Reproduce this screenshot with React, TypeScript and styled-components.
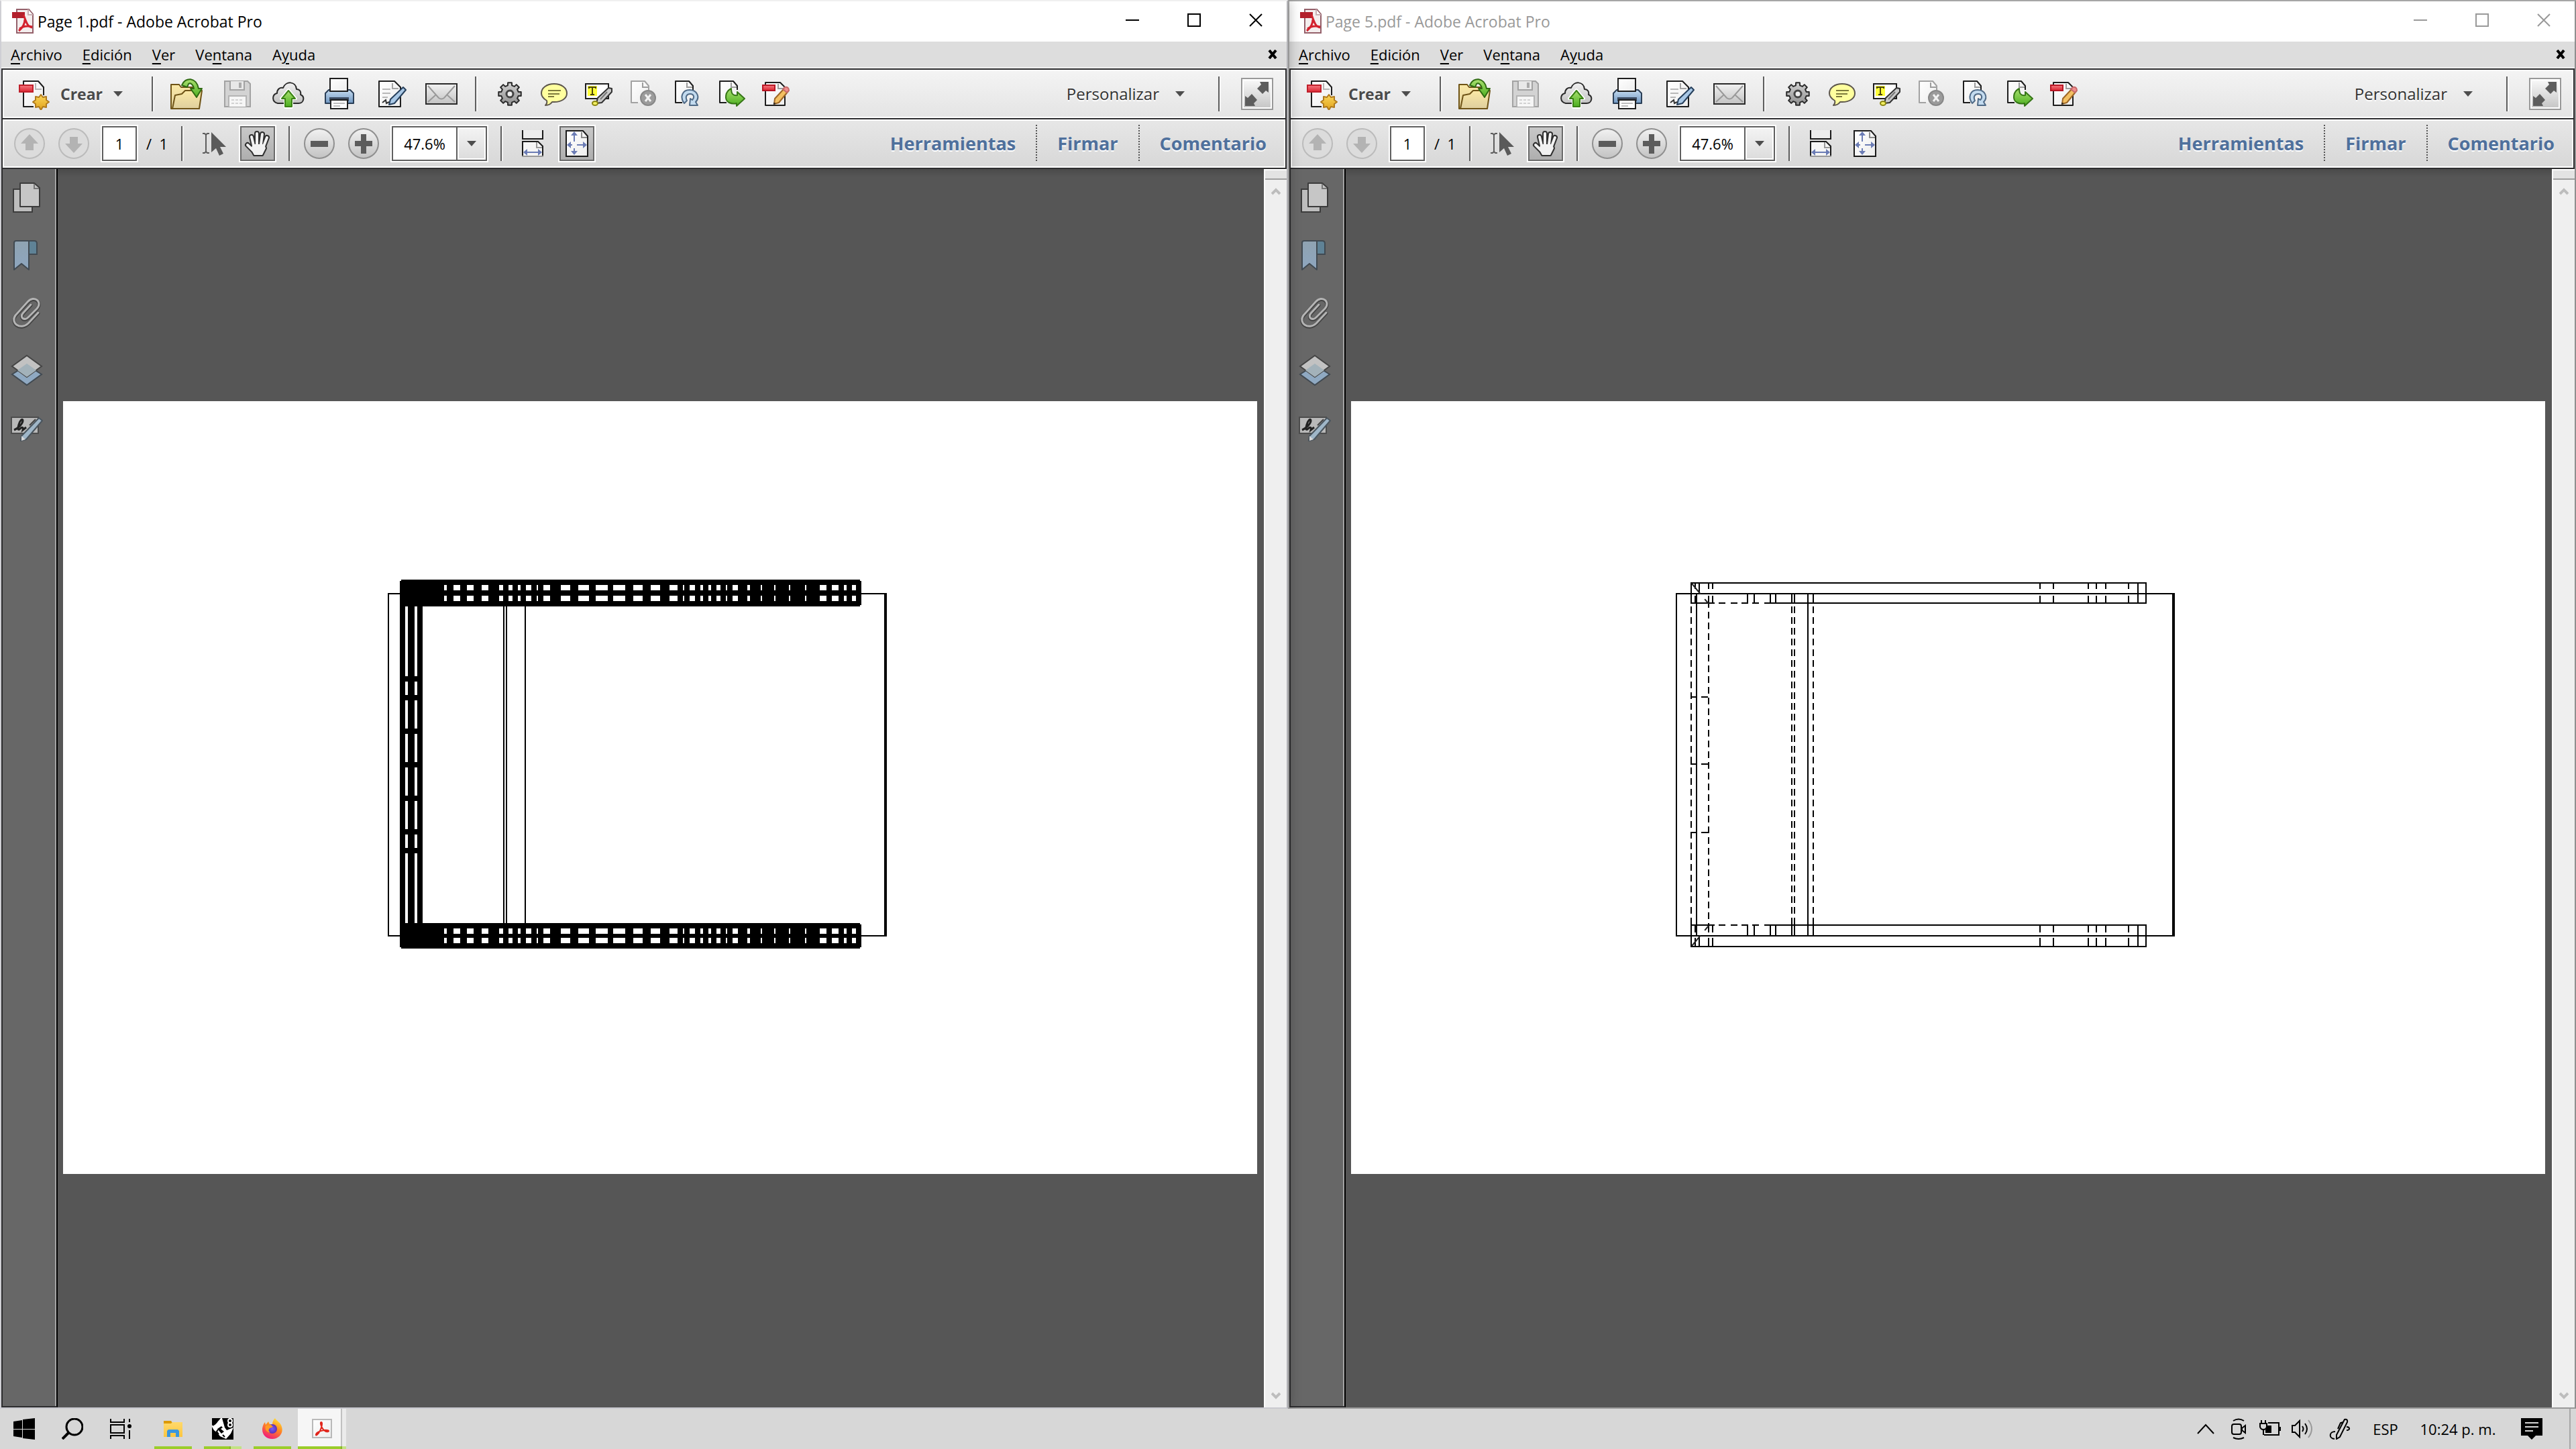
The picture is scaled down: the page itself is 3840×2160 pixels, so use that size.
import React from "react";
import styled, { createGlobalStyle, css } from "styled-components";

const INK = "#2d2d2f";
const UI_FONT = `"Open Sans", "Noto Sans", sans-serif`;

const GlobalStyle = createGlobalStyle`
  *, *::before, *::after { box-sizing: border-box; }
  html, body { margin: 0; background: #d7d7d7; }
  body { font-family: ${UI_FONT}; color: #000; overflow: hidden; }
  button, input { font-family: inherit; color: inherit; margin: 0; padding: 0; border: 0; background: none; }
  svg { display: block; flex: none; }
`;

/* ---------- Layout ---------- */

const Desktop = styled.div`
  display: flex;
  flex-direction: column;
  height: 100vh;
`;

const Windows = styled.div`
  display: flex;
  flex: 1;
  min-height: 0;
`;

const Pane = styled.section<{ $active: boolean }>`
  display: flex;
  flex-direction: column;
  flex: 1;
  min-width: 0;
  position: relative;
  background: #fff;
  border-style: solid;
  border-width: 2px;
  ${({ $active }) =>
    $active
      ? css`
          border-color: #f0f0f0 #b4b4b8 #c9c9cf #cfcfd4;
          z-index: 1;
          box-shadow: 0 0 18px rgba(0, 0, 0, 0.32);
        `
      : css`
          border-color: #a6a6a6 #8f8f8f #9a9a9a #b0b0b0;
        `}
`;

const TitleBar = styled.header`
  display: flex;
  align-items: center;
  height: 60px;
  padding-left: 16px;
  background: #fff;
`;

const Title = styled.h1<{ $active: boolean }>`
  flex: 1;
  margin: 0 0 0 6px;
  font-size: 23px;
  line-height: 32px;
  font-weight: 400;
  color: ${({ $active }) => ($active ? "#000" : "#999")};
`;

const WindowButton = styled.button<{ $active: boolean }>`
  display: flex;
  align-items: center;
  justify-content: center;
  width: 92px;
  height: 56px;
  align-self: flex-start;
  color: ${({ $active }) => ($active ? "#000" : "#999")};
`;

const MenuBar = styled.nav`
  display: flex;
  align-items: center;
  gap: 30px;
  height: 40px;
  padding: 0 14px;
  background: #ddd;
  border-bottom: 2px solid #efefef;
`;

const MenuItem = styled.button`
  font-size: 22px;
  line-height: 32px;
  u {
    text-decoration-thickness: 2px;
    text-underline-offset: 4px;
  }
`;

const CloseDocument = styled.button`
  margin-left: auto;
  width: 14px;
  height: 14px;
`;

const Bar = styled.div<{ $low?: boolean }>`
  display: flex;
  align-items: center;
  flex: none;
  height: ${({ $low }) => ($low ? 76 : 74)}px;
  border: 2px solid ${INK};
  border-bottom-width: ${({ $low }) => ($low ? 2 : 0)}px;
  background: ${({ $low }) =>
    $low ? "linear-gradient(#e7e7e7, #d7d7d7)" : "linear-gradient(#f4f4f4, #e4e4e4)"};
  box-shadow: inset 0 0 0 2px #fff;
`;

const Rule = styled.span<{ $before?: number; $after?: number }>`
  flex: none;
  width: 2px;
  height: 52px;
  margin-left: ${({ $before = 0 }) => $before}px;
  margin-right: ${({ $after = 0 }) => $after}px;
  background: #5e5e5e;
  box-shadow: 2px 0 0 rgba(255, 255, 255, 0.6);
`;

const DottedRule = styled.span`
  flex: none;
  width: 2px;
  height: 56px;
  background: repeating-linear-gradient(#555 0 2px, transparent 2px 4px);
`;

const Spacer = styled.span`
  flex: 1;
`;

const ToolGroup = styled.div<{ $gap: number }>`
  display: flex;
  align-items: center;
  gap: ${({ $gap }) => $gap}px;
`;

const CreateButton = styled.button`
  display: flex;
  align-items: center;
  width: 222px;
  height: 52px;
  padding-left: 22px;
  font-size: 23px;
  line-height: 32px;
  font-weight: 700;
  color: #4a4a4a;
  text-shadow: 0 2px 0 #fff;
  gap: 16px;
`;

const Tool = styled.button<{ $width: number }>`
  display: flex;
  align-items: center;
  justify-content: center;
  flex: none;
  width: ${({ $width }) => $width}px;
  height: 52px;
`;

const Toggle = styled.button<{ $on: boolean }>`
  display: flex;
  align-items: center;
  justify-content: center;
  flex: none;
  width: 56px;
  height: 56px;
  border: 2px solid transparent;
  ${({ $on }) =>
    $on &&
    css`
      border-color: #fff;
      background: linear-gradient(#c9c9c9, #adadad);
      box-shadow: inset 0 0 0 2px #6b6b6b;
    `}
`;

const Customize = styled.button`
  display: flex;
  align-items: center;
  gap: 24px;
  font-size: 24px;
  line-height: 32px;
  color: #333;
  text-shadow: 0 2px 0 #fff;
`;

const ExpandButton = styled.button`
  display: flex;
  align-items: center;
  justify-content: center;
  width: 48px;
  height: 48px;
  margin-right: 18px;
  border: 2px solid #999;
  box-shadow: inset 0 0 0 2px #fff;
  background: linear-gradient(#fafafa, #c4c4c4);
`;

const TaskTab = styled.button`
  padding: 0 30px;
  font-size: 27px;
  line-height: 40px;
  font-weight: 700;
  color: #4f709c;
  text-shadow: 0 2px 0 #fff;
  &:last-child {
    padding-right: 28px;
  }
`;

const FieldFrame = styled.label<{ $width: number }>`
  display: flex;
  align-items: stretch;
  flex: none;
  width: ${({ $width }) => $width}px;
  height: 52px;
  border: 2px solid #5f5f5f;
  outline: 2px solid #fff;
  background: #fff;
`;

const Field = styled.input`
  flex: 1;
  min-width: 0;
  width: 0;
  font-size: 22px;
  line-height: 32px;
  text-align: center;
`;

const ZoomArrow = styled.button`
  display: flex;
  align-items: center;
  justify-content: center;
  width: 44px;
  border-left: 2px solid #5f5f5f;
  background: linear-gradient(#f4f4f4, #dcdcdc);
  box-shadow: inset 0 0 0 2px #fff;
`;

const PageCount = styled.span`
  width: 52px;
  margin-left: 14px;
  font-size: 22px;
  line-height: 32px;
  white-space: pre;
`;

const Pager = styled.div`
  display: flex;
  align-items: center;
  gap: 18px;
  padding-left: 16px;
`;

const Body = styled.div`
  display: flex;
  flex: 1;
  min-height: 0;
`;

const Sidebar = styled.aside`
  display: flex;
  flex-direction: column;
  align-items: center;
  gap: 38px;
  flex: none;
  width: 84px;
  padding: 18px 8px 0 0;
  background: #676767;
  border-left: 2px solid ${INK};
  border-right: 2px solid #000;
  border-bottom: 2px solid ${INK};
  box-shadow: inset -2px 0 0 #a3a3a3;
`;

const SideButton = styled.button`
  flex: none;
  width: 48px;
  height: 48px;
`;

const Workspace = styled.main`
  display: flex;
  align-items: center;
  flex: 1;
  min-width: 0;
  padding: 0 10px 2px 8px;
  background: linear-gradient(#4a4a4a, #565656 12px);
`;

const Sheet = styled.article`
  flex: 1;
  aspect-ratio: 1780 / 1152;
  background: #fff;
  svg {
    width: 100%;
    height: 100%;
  }
`;

const ScrollTrack = styled.div`
  display: flex;
  flex-direction: column;
  align-items: center;
  flex: none;
  width: 34px;
  background: #efefef;
  border-left: 2px solid #fff;
`;

const SplitHandle = styled.span`
  width: 100%;
  height: 16px;
  border-top: 2px solid #fff;
  border-bottom: 2px solid #9f9f9f;
  background: #e3e3e3;
`;

const ScrollButton = styled.button`
  display: flex;
  align-items: center;
  justify-content: center;
  width: 32px;
  height: 34px;
  &:last-child {
    margin-top: auto;
  }
`;

const Taskbar = styled.footer`
  display: flex;
  align-items: stretch;
  flex: none;
  height: 60px;
  position: relative;
  z-index: 2;
  background: #d7d7d7;
`;

const TaskButton = styled.button<{ $state?: "idle" | "running" | "stacked" | "active" }>`
  display: flex;
  align-items: center;
  justify-content: center;
  flex: none;
  width: 72px;
  background-repeat: no-repeat;
  ${({ $state }) =>
    $state === "running" &&
    css`
      background-image: linear-gradient(#9acd2a, #9acd2a);
      background-position: 8px 100%;
      background-size: 56px 4px;
    `}
  ${({ $state }) =>
    $state === "stacked" &&
    css`
      background-image: linear-gradient(90deg, #9acd2a 0 38px, #86b428 38px 40px, #c3e283 40px);
      background-position: 8px 100%;
      background-size: 56px 4px;
    `}
  ${({ $state }) =>
    $state === "active" &&
    css`
      background-image: linear-gradient(90deg, #9acd2a 0 64px, #86b428 64px 66px, #c3e283 66px),
        linear-gradient(90deg, #f6f6f6 0 64px, #c0c0c0 64px 66px, #ebebeb 66px);
      background-position: 0 100%, 0 0;
      background-size: 100% 4px, 100% 100%;
    `}
`;

const TaskApps = styled.div`
  display: flex;
  gap: 2px;
  margin-left: 6px;
`;

const Tray = styled.div`
  display: flex;
  margin-left: auto;
`;

const TrayButton = styled.button<{ $width?: number }>`
  display: flex;
  align-items: center;
  justify-content: center;
  flex: none;
  width: ${({ $width = 48 }) => $width}px;
  font-size: 22px;
  line-height: 32px;
`;

const ShowDesktop = styled.button`
  width: 10px;
  margin-left: 18px;
  border-left: 2px solid #a8a8a8;
`;

/* ---------- Shared gradients ---------- */

const Gradients = () => (
  <svg width="0" height="0" aria-hidden="true">
    <defs>
      <linearGradient id="paper" x2="1" y2="1">
        <stop stopColor="#fff" />
        <stop offset="1" stopColor="#ededed" />
      </linearGradient>
      <linearGradient id="grey" x2="0" y2="1">
        <stop stopColor="#f2f2f2" />
        <stop offset="1" stopColor="#c2c2c2" />
      </linearGradient>
      <linearGradient id="steel" x2="0" y2="1">
        <stop stopColor="#d0d0d0" />
        <stop offset="1" stopColor="#8e8e8e" />
      </linearGradient>
      <linearGradient id="red" x2="0" y2="1">
        <stop stopColor="#f47a80" />
        <stop offset="1" stopColor="#dc2430" />
      </linearGradient>
      <linearGradient id="green" x2="0" y2="1">
        <stop stopColor="#a9e070" />
        <stop offset="1" stopColor="#4caf1f" />
      </linearGradient>
      <linearGradient id="blue" x2="0" y2="1">
        <stop stopColor="#c6dcf0" />
        <stop offset="1" stopColor="#6f97c2" />
      </linearGradient>
      <linearGradient id="manila" x2="0" y2="1">
        <stop stopColor="#fbe9a6" />
        <stop offset="1" stopColor="#dfcf9e" />
      </linearGradient>
      <linearGradient id="gold" x2="0" y2="1">
        <stop stopColor="#fbd75a" />
        <stop offset="1" stopColor="#e0a21c" />
      </linearGradient>
      <linearGradient id="slate" x2="0" y2="1">
        <stop stopColor="#8fa3b2" />
        <stop offset="1" stopColor="#8ea6bf" />
      </linearGradient>
      <linearGradient id="flame" x1="0.8" x2="0.3" y2="1">
        <stop stopColor="#ffe63c" />
        <stop offset="0.45" stopColor="#ff8a1f" />
        <stop offset="1" stopColor="#f0177f" />
      </linearGradient>
      <radialGradient id="globe">
        <stop stopColor="#7a5cf5" />
        <stop offset="1" stopColor="#5b2fb5" />
      </radialGradient>
      <linearGradient id="folder" x2="0" y2="1">
        <stop stopColor="#ffd96b" />
        <stop offset="1" stopColor="#fbc540" />
      </linearGradient>
    </defs>
  </svg>
);

type GlyphProps = { size?: number; children: React.ReactNode };
const Glyph = ({ size = 48, children }: GlyphProps) => (
  <svg width={size} height={size} viewBox={`0 0 ${size} ${size}`} fill="none" aria-hidden="true">
    {children}
  </svg>
);

/* ---------- Toolbar icons ---------- */

const Caret = () => (
  <svg width="14" height="10" viewBox="0 0 14 10" aria-hidden="true">
    <path d="M0 1h14L7 9z" fill="#4d4d4d" />
  </svg>
);

const AcrobatDoc = () => (
  <svg width="32" height="40" viewBox="0 0 32 40" fill="none" aria-hidden="true">
    <path d="M7 2h18l6 7v28H7z" fill="#f4eeee" stroke="#94606a" strokeWidth="2" />
    <path d="M24 2v8h7" fill="#fff" stroke="#c9b0b4" strokeWidth="2" />
    <path d="M0 6h19v9H0z" fill="#b3202c" />
    <path d="M17 10c4 11 6 18 13 19M19 17c0 8-4 13-9 17M11 31c5-4 12-5 19-3" stroke="#d3212d" strokeWidth="3" />
  </svg>
);

const CreateIcon = () => (
  <Glyph>
    <path d="M9 5h22l8 8v31H9z" fill="url(#paper)" />
    <path d="M9 13V5h22l8 9v12M9 20v23h15" stroke="#1e1e1e" strokeWidth="2" strokeLinejoin="round" />
    <path d="M27 8v9h9" stroke="#b5b5b5" strokeWidth="2" />
    <path d="M3 11h20v10H3z" fill="url(#red)" stroke="#c0202b" strokeWidth="2" />
    <path
      d="M35 25l3 4 5-1v5l4 3-4 3v5l-5-1-3 5-3-5-5 1v-5l-4-3 4-3v-5l5 1z"
      fill="url(#gold)"
      stroke="#b07a1c"
      strokeWidth="2"
      strokeLinejoin="round"
    />
  </Glyph>
);

const OpenIcon = () => (
  <Glyph>
    <path d="M1 10h12l3 4h23v32H1z" fill="url(#manila)" stroke="#6f5417" strokeWidth="2" strokeLinejoin="round" />
    <path d="M3 46l4-20 10-2 5-5h25l-4 27z" fill="url(#manila)" stroke="#6f5417" strokeWidth="2" strokeLinejoin="round" />
    <path
      d="M17 11C22-2 39-1 42 16h5l-8 13-9-13h5c-1-6-5-9-8-7l-2 5z"
      fill="url(#green)"
      stroke="#2f6a12"
      strokeWidth="2"
      strokeLinejoin="round"
    />
  </Glyph>
);

const SaveIcon = () => (
  <Glyph>
    <path d="M5 5h34l4 4v34H5z" fill="#d3d3d3" stroke="#a2a2a2" strokeWidth="2" />
    <path d="M13 5v13h21V5" fill="#e8e8e8" stroke="#a2a2a2" strokeWidth="2" />
    <path d="M26 7h4v8h-4z" fill="#aaa" />
    <path d="M11 43V27h26v16" fill="#f6f6f6" stroke="#b4b4b4" strokeWidth="2" />
    <path d="M15 33h18M15 38h18" stroke="#d2d2d2" strokeWidth="2" strokeDasharray="4 2" />
  </Glyph>
);

const CloudIcon = () => (
  <Glyph>
    <path
      d="M8 38C-1 36-1 25 7 23c0-6 4-9 9-8 4-11 19-10 20 2 5 0 7 4 6 8 7 3 5 13-3 13z"
      fill="url(#grey)"
      stroke="#2a2a2a"
      strokeWidth="2"
      strokeLinejoin="round"
    />
    <path d="M24 18l11 13h-6v13H19V31h-6z" fill="url(#green)" stroke="#fff" strokeWidth="4" strokeLinejoin="round" />
    <path d="M24 19l10 12h-5v12H19V31h-5z" fill="url(#green)" stroke="#3b8216" strokeWidth="2" strokeLinejoin="round" />
  </Glyph>
);

const PrintIcon = () => (
  <Glyph>
    <path d="M3 23l5-5h32l5 5v15H3z" fill="url(#blue)" stroke="#2b3f57" strokeWidth="2" strokeLinejoin="round" />
    <path d="M10 1h26v19H10z" fill="url(#paper)" stroke="#1e1e1e" strokeWidth="2" />
    <path d="M9 29h29v6H9z" fill="#3c4b60" />
    <path d="M11 33h25v13H11z" fill="#fff" stroke="#1e1e1e" strokeWidth="2" />
    <path d="M15 38h17M15 42h10" stroke="#bdbdbd" strokeWidth="2" />
  </Glyph>
);

const SignDocIcon = () => (
  <Glyph>
    <path d="M7 5h23l9 9v29H7z" fill="url(#paper)" stroke="#1e1e1e" strokeWidth="2" strokeLinejoin="round" />
    <path d="M27 8v8h9" stroke="#a5a5a5" strokeWidth="2" />
    <path d="M12 17h12M12 23h12M12 29h8" stroke="#b8b8b8" strokeWidth="2" />
    <path d="M43 14l4 4-17 20-8 2 2-8z" fill="#a9c8e6" stroke="#27405c" strokeWidth="2" strokeLinejoin="round" />
    <path d="M12 37l5-4 1 5 4-2" stroke="#333" strokeWidth="2" />
  </Glyph>
);

const MailIcon = () => (
  <Glyph>
    <path d="M1 9h46v30H1z" fill="url(#grey)" stroke="#2a2a2a" strokeWidth="2" />
    <path d="M4 12l16 18q4 3 8 0l16-18M4 36l12-11M44 36L32 25" stroke="#999" strokeWidth="2" />
  </Glyph>
);

const gearPath = (() => {
  const points: string[] = [];
  const teeth = 8;
  for (let i = 0; i < teeth; i++) {
    const centre = (i / teeth) * Math.PI * 2;
    [
      [-0.24, 13],
      [-0.17, 17],
      [0.17, 17],
      [0.24, 13],
    ].forEach(([offset, radius]) => {
      points.push(`${(24 + Math.sin(centre + offset) * radius).toFixed(2)} ${(24 - Math.cos(centre + offset) * radius).toFixed(2)}`);
    });
  }
  return `M${points.join("L")}z`;
})();

const GearIcon = () => (
  <Glyph>
    <path d={gearPath} fill="url(#steel)" stroke="#2a2a2a" strokeWidth="2" strokeLinejoin="round" />
    <circle cx="24" cy="24" r="5" fill="#efefef" stroke="#444" strokeWidth="3" />
  </Glyph>
);

const CommentIcon = () => (
  <Glyph>
    <path
      d="M24 9c11 0 19 6 19 14s-8 13-19 13h-3c-2 3-5 5-10 5 2-2 3-4 2-7-5-3-8-6-8-11C5 15 13 9 24 9z"
      fill="#ffff9e"
      stroke="#5d564c"
      strokeWidth="2"
      strokeLinejoin="round"
    />
    <path d="M15 19h19M15 24h17M15 28h9" stroke="#7d7a3c" strokeWidth="2" />
  </Glyph>
);

const HighlightIcon = () => (
  <Glyph>
    <path d="M5 9h34v22H5z" fill="#fff" stroke="#1e1e1e" strokeWidth="2" />
    <path d="M8 12h14v15H8z" fill="#ffff3a" />
    <path d="M10 16v-2h10v2M15 14v11M12 25h6" stroke="#4d470c" strokeWidth="2" />
    <path d="M39 15l5 1v5L29 37l-8 1 2-8z" fill="#c9c9c9" stroke="#333" strokeWidth="2" strokeLinejoin="round" />
    <path d="M27 32l10-11" stroke="#777" strokeWidth="2" />
    <ellipse cx="19" cy="38" rx="4" ry="3" fill="#f1ee62" stroke="#8b8611" strokeWidth="2" />
  </Glyph>
);

const PageOutline = ({ stroke }: { stroke: string }) => (
  <>
    <path d="M7 5h20l6 7v25H7z" fill="url(#paper)" />
    <path d="M17 37H7V5h20l6 7v6" stroke={stroke} strokeWidth="2" strokeLinejoin="round" />
    <path d="M24 7v7h8" stroke="#9d9d9d" strokeWidth="2" />
  </>
);

const DeletePageIcon = () => (
  <Glyph>
    <PageOutline stroke="#a2a2a2" />
    <circle cx="32" cy="30" r="11" fill="#9b9b9b" stroke="#878787" strokeWidth="2" />
    <path d="M28 25l8 10M36 25l-8 10" stroke="#f1f1f1" strokeWidth="3" />
  </Glyph>
);

const RotatePageIcon = () => (
  <Glyph>
    <PageOutline stroke="#1e1e1e" />
    <path
      d="M20 38c-7-9-3-20 8-20s16 11 9 18l3 5H28l1-10 3 2c4-4 2-9-3-9s-8 4-5 10z"
      fill="#c3dbef"
      stroke="#4f6a86"
      strokeWidth="2"
      strokeLinejoin="round"
    />
  </Glyph>
);

const ExtractPageIcon = () => (
  <Glyph>
    <PageOutline stroke="#1e1e1e" />
    <path
      d="M24 16c-9 4-11 17-3 21 4 2 7 2 11 1v4l12-11-11-10v5c-7 1-9-3-9-10z"
      fill="url(#green)"
      stroke="#357516"
      strokeWidth="2"
      strokeLinejoin="round"
    />
  </Glyph>
);

const EditPdfIcon = () => (
  <Glyph>
    <path d="M9 7h22l7 7v27H9z" fill="url(#paper)" stroke="#1e1e1e" strokeWidth="2" strokeLinejoin="round" />
    <path d="M28 9v7h8" stroke="#9d9d9d" strokeWidth="2" />
    <path d="M5 11h18v8H5z" fill="url(#red)" stroke="#b81624" strokeWidth="2" />
    <path d="M37 16l6 4-14 17-7 2 1-8z" fill="#f3c062" stroke="#9d6626" strokeWidth="2" strokeLinejoin="round" />
    <path d="M38 14q6-1 6 5l-3 3-6-5z" fill="#f08f8f" stroke="#c76a6a" strokeWidth="2" />
    <path d="M21 37l4 1-4 2z" fill="#222" />
  </Glyph>
);

const ExpandIcon = () => (
  <svg width="40" height="40" viewBox="0 0 40 40" fill="#5d5d5d" aria-hidden="true">
    <path d="M24 2h13v16l-4-3-5 5-8-8 6-6z" />
    <path d="M17 38H2V23l4 3 6-6 8 9-5 5z" />
  </svg>
);

type RoundKind = "up" | "down" | "minus" | "plus";
const roundShapes: Record<RoundKind, string> = {
  up: "M23 9l13 14h-7v10H17V23h-7z",
  down: "M23 37L10 23h7V13h12v10h7z",
  minus: "M10 19h26v9H10z",
  plus: "M19 9h8v10h9v8h-9v11h-8V27h-9v-8h9z",
};

const RoundIcon = ({ kind }: { kind: RoundKind }) => {
  const faded = kind === "up" || kind === "down";
  return (
    <Glyph size={46}>
      <circle cx="23" cy="23" r="22" fill={faded ? "#dcdcdc" : "url(#grey)"} stroke={faded ? "#bbb" : "#8f8f8f"} strokeWidth="2" />
      <path d={roundShapes[kind]} fill={faded ? "#b3b3b3" : "#5c5c5c"} />
    </Glyph>
  );
};

const SelectIcon = () => (
  <svg width="38" height="40" viewBox="0 0 38 40" fill="none" aria-hidden="true">
    <path d="M2 5h3l2 2 2-2h3M2 34h3l2-2 2 2h3M7 7v25" stroke="#5d5d5d" strokeWidth="2" />
    <path d="M15 3l22 22h-9l5 10-6 3-5-11-7 6z" fill="#5a5a5a" />
  </svg>
);

const handFingers = "M14 24L11 11M19 22V6M25 22l2-15M29 25l5-13M13 31l-8-8";
const handPalm = "M13 22h17l2 6-5 10H15l-5-9z";

const HandIcon = () => (
  <svg width="40" height="42" viewBox="0 0 40 42" fill="none" strokeLinecap="round" strokeLinejoin="round" aria-hidden="true">
    <path d={handFingers} stroke="#2f2f2f" strokeWidth="8" />
    <path d={handPalm} fill="#2f2f2f" stroke="#2f2f2f" strokeWidth="4" />
    <path d={handFingers} stroke="#f1f1f1" strokeWidth="4" />
    <path d={handPalm} fill="#f1f1f1" />
  </svg>
);

const FitWidthIcon = () => (
  <svg width="34" height="42" viewBox="0 0 34 42" fill="none" aria-hidden="true">
    <path d="M2 1h30v13H2z" fill="#ededed" />
    <path d="M2 1v13h30V1" stroke="#1a1a1a" strokeWidth="2" />
    <path d="M2 39V18h23l7 7v14" fill="#f5f5f5" stroke="#1a1a1a" strokeWidth="2" />
    <path d="M23 19v8h8" stroke="#999" strokeWidth="2" />
    <path d="M1 40h32" stroke="#999" strokeWidth="2" />
    <path d="M8 34h18" stroke="#6b7cb5" strokeWidth="2" />
    <path d="M3 34l6-5v10zM31 34l-6-5v10z" fill="#6b7cb5" />
  </svg>
);

const FitPageIcon = () => (
  <svg width="36" height="42" viewBox="0 0 36 42" fill="none" aria-hidden="true">
    <path d="M2 2h25l7 8v30H2z" fill="url(#paper)" stroke="#1a1a1a" strokeWidth="2" />
    <path d="M25 4v8h8" stroke="#8c8c8c" strokeWidth="2" />
    <path d="M14 6v12M14 28v8M5 23h6M18 23h12" stroke="#6b7cb5" strokeWidth="2" />
    <path d="M14 3l5 6H9zM14 38l5-6H9zM3 23l6-5v10zM33 23l-6-5v10z" fill="#6b7cb5" />
  </svg>
);

/* ---------- Sidebar icons ---------- */

const PagesIcon = () => (
  <Glyph>
    <path d="M4 12h28v34H4z" fill="#bdbdbd" stroke="#3c3c3c" strokeWidth="2" />
    <path d="M14 3h21l8 7v28H14z" fill="#c6c6c6" stroke="#3c3c3c" strokeWidth="2" strokeLinejoin="round" />
    <path d="M35 4v7h7" stroke="#777" strokeWidth="2" />
  </Glyph>
);

const BookmarkIcon = () => (
  <Glyph>
    <path d="M27 3h8q4 0 4 4v16H27z" fill="#5f8296" stroke="#414a52" strokeWidth="2" />
    <path d="M5 46V6q0-3 3-3h19v43l-11-9z" fill="url(#slate)" stroke="#414a52" strokeWidth="2" strokeLinejoin="round" />
  </Glyph>
);

const ClipIcon = () => (
  <Glyph>
    <g strokeLinecap="round" strokeLinejoin="round">
      <path
        d="M41 25L26 41C14 52-1 40 7 29L25 9c10-11 23 0 14 10L26 32c-6 6-13 0-8-6l12-13"
        stroke="#444"
        strokeWidth="5"
      />
      <path
        d="M41 24L26 40C14 51-1 39 7 28L25 8c10-11 23 0 14 10L26 31c-6 6-13 0-8-6l12-13"
        stroke="#b4b4b4"
        strokeWidth="3"
      />
    </g>
  </Glyph>
);

const LayersIcon = () => (
  <Glyph>
    <path d="M24 16l22 14-22 16L2 30z" fill="#8fa9c2" stroke="#414a52" strokeWidth="2" />
    <path d="M24 2l22 16-22 16L2 18z" fill="#c2c2c2" stroke="#444" strokeWidth="2" />
    <path d="M24 14l14 10-14 10-14-10z" fill="#a3b2ba" />
  </Glyph>
);

const SignatureIcon = () => (
  <Glyph>
    <path d="M1 8h40v24H1z" fill="#b9b9b9" stroke="#4c4c4c" strokeWidth="2" />
    <path d="M5 27c7-3 13-10 13-14s-4-1-6 6-1 9 2 6 5-2 4 2l5-4" stroke="#222" strokeWidth="3" />
    <path d="M28 20l9-9" stroke="#444" strokeWidth="2" />
    <path d="M42 9l5 4-24 28-8 2 1-7z" fill="#9fb6c8" stroke="#4a555e" strokeWidth="2" strokeLinejoin="round" />
    <path d="M16 36l6 5-6 2z" fill="#d8d8d8" />
  </Glyph>
);

/* ---------- Drawings ---------- */

const span = (x: number, y: number, w: number, h: number) => `M${x} ${y}h${w}v${h}h${-w}z`;

// Openings along each rail: [start, end]
const openings = [
  [568, 572], [582, 592], [602, 612], [624, 634], [650, 656], [664, 670], [678, 682], [690, 698],
  [706, 708], [716, 726], [742, 756], [768, 784], [794, 812], [820, 838], [850, 864], [876, 890],
  [904, 916], [924, 926], [934, 942], [950, 954], [962, 966], [974, 980], [988, 990], [998, 1006],
  [1020, 1024], [1040, 1042], [1060, 1062], [1082, 1084], [1106, 1108], [1128, 1138], [1146, 1156],
  [1164, 1168], [1176, 1182],
];

const Frame = () => (
  <path
    d={
      span(484, 286, 742, 2) + span(484, 796, 742, 2) + span(484, 286, 2, 512) + span(1224, 286, 4, 512)
    }
    fill="#000"
  />
);

const crossings = [410, 438, 488, 538, 588, 638, 666];

const SolidPlan = () => (
  <svg viewBox="0 0 1780 1152" shapeRendering="crispEdges" role="img" aria-label="Page 1">
    <Frame />
    <path
      d={
        span(504, 266, 684, 40) +
        span(502, 268, 688, 36) +
        span(504, 778, 684, 38) +
        span(502, 780, 688, 34) +
        span(502, 300, 8, 490) +
        span(514, 300, 10, 490) +
        span(528, 300, 8, 490) +
        crossings.map((y) => span(504, y, 30, 8)).join("") +
        span(656, 300, 2, 480) +
        span(660, 300, 2, 480) +
        span(688, 300, 2, 480)
      }
      fill="#000"
    />
    <path
      d={openings
        .map(([a, b]) => [274, 290, 786, 800].map((y) => span(a, y, b - a, 8)).join(""))
        .join("")}
      fill="#fff"
    />
  </svg>
);

const splitPosts = [512, 532, 538, 1026, 1046, 1098, 1110, 1124, 1158];
const shortPosts = [590, 600, 624, 632, 656, 660, 688];

const DashedPlan = () => (
  <svg viewBox="0 0 1780 1152" shapeRendering="crispEdges" role="img" aria-label="Page 5">
    <Frame />
    <path
      d={
        span(506, 270, 680, 2) +
        span(616, 300, 570, 2) +
        span(506, 300, 36, 2) +
        span(616, 780, 570, 2) +
        span(506, 780, 36, 2) +
        span(506, 812, 680, 2) +
        [270, 782].map((y) => span(506, y, 2, 32) + span(1172, y, 2, 32) + span(1184, y, 2, 32)).join("") +
        [548, 566, 582, 598].map((x) => span(x, 300, 10, 2) + span(x, 780, 10, 2)).join("") +
        splitPosts
          .map((x) => span(x, 270, 2, 10) + span(x, 290, 2, 10) + span(x, 782, 2, 10) + span(x, 800, 2, 12))
          .join("") +
        shortPosts.map((x) => span(x, 288, 2, 12) + span(x, 782, 2, 14)).join("") +
        span(518, 270, 2, 16) +
        span(518, 798, 2, 14) +
        span(514, 286, 2, 512) +
        span(680, 286, 2, 512) +
        [440, 540, 642].map((y) => span(506, y, 8, 2) + span(522, y, 10, 2)).join("")
      }
      fill="#000"
    />
    <g stroke="#000" strokeWidth="2" strokeDasharray="10 6">
      <path d="M507 306V780M657 306V780M661 306V780M689 306V780" />
      <path d="M533 298V780" />
    </g>
    <g stroke="#222" strokeWidth="2" strokeDasharray="20 10" shapeRendering="auto">
      <path d="M508 272l25 30M508 812l25-30" />
    </g>
  </svg>
);

/* ---------- Taskbar icons ---------- */

const StartIcon = () => (
  <Glyph size={32}>
    <path d="M0 5l13-2v13H0zM14 2l18-2v16H14zM0 17h13v12L0 27zM14 17h18v15l-18-2z" fill="#000" />
  </Glyph>
);
const SearchIcon = () => (
  <Glyph size={32}>
    <circle cx="19" cy="13" r="12" stroke="#000" strokeWidth="3" />
    <path d="M10 22L1 31" stroke="#000" strokeWidth="4" />
  </Glyph>
);
const TaskViewIcon = () => (
  <Glyph size={32}>
    <path d="M1 1v5h20V1M1 10h20v12H1zM1 31v-5h20v5M29 1v5M29 18v13" stroke="#000" strokeWidth="2" />
    <circle cx="29" cy="12" r="3" fill="#000" />
  </Glyph>
);
const ExplorerIcon = () => (
  <Glyph size={32}>
    <path d="M2 4h11l2 3-2 3H2z" fill="#dc9a08" />
    <path d="M2 8h11l2-2h15v22H2z" fill="url(#folder)" />
    <path d="M7 28V19l2-2h14l2 2v9h-5v-6h-8v6z" fill="#3a96dd" />
  </Glyph>
);
const RhinoIcon = () => (
  <Glyph size={32}>
    <path d="M0 0h32v32H0z" fill="#000" />
    <path d="M0 11l7-4C11 3 12 1 13 0h2l4 14 3 4 10-4-4 9-7 8-9-4-4-5-5-4-3-5z" fill="#fff" />
    <path d="M3 0h6C10 4 7 9 1 12zM8 16l6-4 2 2-3 2 5 4-4 3z" fill="#000" />
    <path d="M9 17l-2 3 3 4M16 25l3 3" stroke="#000" strokeWidth="2" />
    <circle cx="27" cy="4" r="3" stroke="#fff" strokeWidth="2" />
    <circle cx="27" cy="10" r="3" stroke="#fff" strokeWidth="2" />
  </Glyph>
);
const FirefoxIcon = () => (
  <Glyph size={32}>
    <path
      d="M20 0c2 4 8 6 10 13 3 9-4 18-14 18C7 31 1 25 1 17c0-4 2-9 4-11l1 4 4-5 2 4h4c0-4 2-7 4-9z"
      fill="url(#flame)"
    />
    <circle cx="16" cy="16" r="7" fill="url(#globe)" />
    <path d="M6 11l8-1 3 3-5 2c-2 2-2 5 1 6-5 1-9-4-7-10z" fill="#ff9a24" />
  </Glyph>
);
const AcrobatTile = () => (
  <Glyph size={32}>
    <path d="M2 2h28v27H2z" fill="url(#paper)" stroke="#b9b9b9" strokeWidth="2" />
    <path
      d="M15 6c-2 0-1 4 1 8s6 7 9 6-1-3-6-2-11 3-12 6 3 1 6-5 4-13 2-13z"
      stroke="#e1251b"
      strokeWidth="2"
      strokeLinejoin="round"
    />
  </Glyph>
);

const ChevronUp = () => (
  <svg width="28" height="18" viewBox="0 0 28 18" fill="none" aria-hidden="true">
    <path d="M2 16L14 3l12 13" stroke="#000" strokeWidth="2" />
  </svg>
);
const MeetIcon = () => (
  <Glyph size={32}>
    <path d="M9 4q8-5 16 0M9 29q8 4 16 0" stroke="#000" strokeWidth="2" />
    <rect x="7" y="9" width="14" height="15" rx="3" stroke="#000" strokeWidth="2" />
    <path d="M22 15l5-4v11l-5-4z" stroke="#000" strokeWidth="2" />
  </Glyph>
);
const BatteryIcon = () => (
  <Glyph size={32}>
    <path d="M13 7h16v18H7M6 25V16M31 13v6M3 3v5M9 3v5" stroke="#000" strokeWidth="2" />
    <path d="M1 8h10v5q-1 4-5 4t-5-4z" stroke="#000" strokeWidth="2" />
    <path d="M12 11h6v11H9v-4z" fill="#000" />
  </Glyph>
);
const VolumeIcon = () => (
  <Glyph size={34}>
    <path d="M2 12h4l7-7v24l-7-7H2z" stroke="#000" strokeWidth="2" />
    <path d="M17 13q3 4 0 8M21 9q6 8 0 16" stroke="#000" strokeWidth="2" />
    <path d="M26 4q10 13 0 26" stroke="#999" strokeWidth="2" />
  </Glyph>
);
const PenIcon = () => (
  <Glyph size={32}>
    <path d="M23 2q5-1 4 4L16 28l-5 3 0-6zM21 6l-4 1-4 9M26 13c5 0 6 5 0 5M9 20c-9 0-10 10-1 11" stroke="#000" strokeWidth="2" />
  </Glyph>
);
const NotificationIcon = () => (
  <Glyph size={32}>
    <path d="M0 0h32v26H22l-6 6-6-6H0z" fill="#000" />
    <path d="M6 7h20M6 13h20M6 19h12" stroke="#d7d7d7" strokeWidth="2" />
  </Glyph>
);

const ScrollChevron = ({ down }: { down?: boolean }) => (
  <svg width="14" height="12" viewBox="0 0 14 12" fill="none" aria-hidden="true">
    <path d={down ? "M1 2l6 6 6-6" : "M1 10l6-6 6 6"} stroke="#bdbdbd" strokeWidth="4" />
  </svg>
);

/* ---------- Window ---------- */

const fileTools: [string, React.FC][] = [
  ["Abrir", OpenIcon],
  ["Guardar", SaveIcon],
  ["Compartir", CloudIcon],
  ["Imprimir", PrintIcon],
  ["Firmar documento", SignDocIcon],
  ["Correo electrónico", MailIcon],
];

const quickTools: [string, React.FC][] = [
  ["Preferencias", GearIcon],
  ["Nota", CommentIcon],
  ["Resaltar texto", HighlightIcon],
  ["Eliminar páginas", DeletePageIcon],
  ["Rotar páginas", RotatePageIcon],
  ["Extraer páginas", ExtractPageIcon],
  ["Editar PDF", EditPdfIcon],
];

const sideTools: [string, React.FC][] = [
  ["Miniaturas", PagesIcon],
  ["Marcadores", BookmarkIcon],
  ["Adjuntos", ClipIcon],
  ["Capas", LayersIcon],
  ["Firmas", SignatureIcon],
];

// [before, access key, after]
const menus = [
  ["", "A", "rchivo"],
  ["", "E", "dición"],
  ["", "V", "er"],
  ["Ve", "n", "tana"],
  ["A", "y", "uda"],
];

type WindowProps = { name: string; active: boolean; fitPage: boolean; children: React.ReactNode };

const AcrobatWindow = ({ name, active, fitPage, children }: WindowProps) => (
  <Pane $active={active}>
    <TitleBar>
      <AcrobatDoc />
      <Title $active={active}>{name} - Adobe Acrobat Pro</Title>
      <WindowButton $active={active} aria-label="Minimizar">
        <Glyph size={20}>
          <path d="M0 10h20" stroke="currentColor" strokeWidth="2" />
        </Glyph>
      </WindowButton>
      <WindowButton $active={active} aria-label="Maximizar">
        <Glyph size={20}>
          <path d="M1 1h18v18H1z" stroke="currentColor" strokeWidth="2" />
        </Glyph>
      </WindowButton>
      <WindowButton $active={active} aria-label="Cerrar">
        <Glyph size={20}>
          <path d="M1 1l18 18M19 1L1 19" stroke="currentColor" strokeWidth="2" />
        </Glyph>
      </WindowButton>
    </TitleBar>

    <MenuBar>
      {menus.map(([before, key, after]) => (
        <MenuItem key={after}>
          {before}
          <u>{key}</u>
          {after}
        </MenuItem>
      ))}
      <CloseDocument aria-label="Cerrar documento">
        <Glyph size={14}>
          <path d="M2 1l10 12M12 1L2 13" stroke="#000" strokeWidth="4" />
        </Glyph>
      </CloseDocument>
    </MenuBar>

    <Bar>
      <CreateButton>
        <CreateIcon />
        Crear
        <Caret />
      </CreateButton>
      <Rule $after={12} />
      {fileTools.map(([label, Icon]) => (
        <Tool key={label} $width={76} aria-label={label}>
          <Icon />
        </Tool>
      ))}
      <Rule $before={12} $after={17} />
      {quickTools.map(([label, Icon]) => (
        <Tool key={label} $width={66} aria-label={label}>
          <Icon />
        </Tool>
      ))}
      <Spacer />
      <Customize>
        Personalizar
        <Caret />
      </Customize>
      <Rule $before={50} $after={32} />
      <ExpandButton aria-label="Modo de lectura">
        <ExpandIcon />
      </ExpandButton>
    </Bar>

    <Bar $low>
      <Pager>
        <Tool $width={48} aria-label="Página anterior">
          <RoundIcon kind="up" />
        </Tool>
        <Tool $width={48} aria-label="Página siguiente">
          <RoundIcon kind="down" />
        </Tool>
        <FieldFrame $width={52}>
          <Field aria-label="Página" defaultValue="1" />
        </FieldFrame>
      </Pager>
      <PageCount>{"/  1"}</PageCount>
      <Rule $after={22} />
      <ToolGroup $gap={12}>
        <Tool $width={50} aria-label="Seleccionar">
          <SelectIcon />
        </Tool>
        <Toggle $on aria-label="Mano">
          <HandIcon />
        </Toggle>
      </ToolGroup>
      <Rule $before={18} $after={20} />
      <ToolGroup $gap={18}>
        <Tool $width={48} aria-label="Reducir">
          <RoundIcon kind="minus" />
        </Tool>
        <Tool $width={48} aria-label="Ampliar">
          <RoundIcon kind="plus" />
        </Tool>
        <FieldFrame $width={142}>
          <Field aria-label="Zoom" defaultValue="47.6%" />
          <ZoomArrow aria-label="Niveles de zoom">
            <Caret />
          </ZoomArrow>
        </FieldFrame>
      </ToolGroup>
      <Rule $before={20} $after={18} />
      <ToolGroup $gap={10}>
        <Toggle $on={false} aria-label="Ajustar al ancho">
          <FitWidthIcon />
        </Toggle>
        <Toggle $on={fitPage} aria-label="Ajustar página">
          <FitPageIcon />
        </Toggle>
      </ToolGroup>
      <Spacer />
      <TaskTab>Herramientas</TaskTab>
      <DottedRule />
      <TaskTab>Firmar</TaskTab>
      <DottedRule />
      <TaskTab>Comentario</TaskTab>
    </Bar>

    <Body>
      <Sidebar>
        {sideTools.map(([label, Icon]) => (
          <SideButton key={label} aria-label={label}>
            <Icon />
          </SideButton>
        ))}
      </Sidebar>
      <Workspace>
        <Sheet>{children}</Sheet>
      </Workspace>
      <ScrollTrack>
        <SplitHandle />
        <ScrollButton aria-label="Desplazar arriba">
          <ScrollChevron />
        </ScrollButton>
        <ScrollButton aria-label="Desplazar abajo">
          <ScrollChevron down />
        </ScrollButton>
      </ScrollTrack>
    </Body>
  </Pane>
);

export default function App() {
  return (
    <Desktop>
      <GlobalStyle />
      <Windows>
        <AcrobatWindow name="Page 1.pdf" active fitPage>
          <SolidPlan />
        </AcrobatWindow>
        <AcrobatWindow name="Page 5.pdf" active={false} fitPage={false}>
          <DashedPlan />
        </AcrobatWindow>
      </Windows>
      <Taskbar>
        <TaskButton aria-label="Inicio">
          <StartIcon />
        </TaskButton>
        <TaskButton aria-label="Buscar">
          <SearchIcon />
        </TaskButton>
        <TaskButton aria-label="Vista de tareas">
          <TaskViewIcon />
        </TaskButton>
        <TaskApps>
          <TaskButton $state="running" aria-label="Explorador de archivos">
            <ExplorerIcon />
          </TaskButton>
          <TaskButton $state="stacked" aria-label="Rhinoceros">
            <RhinoIcon />
          </TaskButton>
          <TaskButton $state="running" aria-label="Firefox">
            <FirefoxIcon />
          </TaskButton>
          <TaskButton $state="active" aria-label="Adobe Acrobat">
            <AcrobatTile />
          </TaskButton>
        </TaskApps>
        <Tray>
          <TrayButton aria-label="Iconos ocultos">
            <ChevronUp />
          </TrayButton>
          <TrayButton aria-label="Reunirse ahora">
            <MeetIcon />
          </TrayButton>
          <TrayButton aria-label="Batería">
            <BatteryIcon />
          </TrayButton>
          <TrayButton aria-label="Volumen">
            <VolumeIcon />
          </TrayButton>
          <TrayButton $width={64} aria-label="Windows Ink">
            <PenIcon />
          </TrayButton>
          <TrayButton $width={72}>ESP</TrayButton>
          <TrayButton $width={144}>10:24 p. m.</TrayButton>
          <TrayButton $width={76} aria-label="Notificaciones">
            <NotificationIcon />
          </TrayButton>
          <ShowDesktop aria-label="Mostrar escritorio" />
        </Tray>
      </Taskbar>
      <Gradients />
    </Desktop>
  );
}
